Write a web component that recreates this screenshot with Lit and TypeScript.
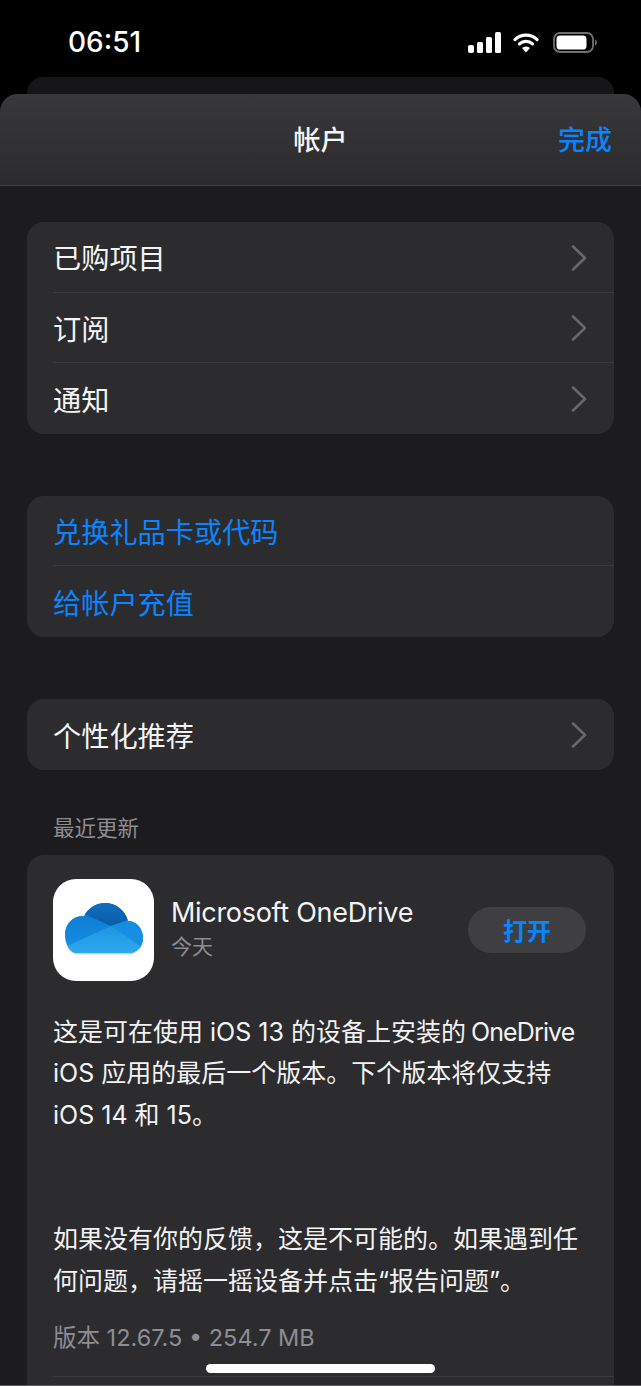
import { LitElement, html, css, svg } from "lit";
import { customElement } from "lit/decorators.js";

const chevron = html`<svg class="chev" width="16" height="26" viewBox="0 0 16 26"><path d="M2 1.5 L14 13 L2 24.5" fill="none" stroke="#68686c" stroke-width="2.6" stroke-linecap="round" stroke-linejoin="round"/></svg>`;

const silhouette = "M19 13 C24 4 32 0 40 0 C51 0 60 7 63 18 C72 18 78 26 78 35 C78 43 72 50 64 50 L12 50 C5 50 0 41 0 31 C0 20 9 12 19 13 Z";

@customElement("app-root")
export class AppRoot extends LitElement {
  static styles = css`
    :host { display: block; width: 641px; height: 1386px; overflow: hidden; background: #000; position: relative;
      font-family: Inter, "Noto Sans CJK SC", sans-serif; color: #f4f4f5; }
    .status { height: 77px; display: flex; justify-content: space-between; align-items: flex-start; padding: 27px 44px 0 68px; box-sizing: border-box; }
    .time { font-size: 28px; line-height: 30px; font-weight: 500; color: #fff; }
    .icons { display: flex; align-items: center; padding-top: 5px; }
    .wifi { margin: 0 14px 0 12px; }
    .behind { height: 17px; margin: 0 27px; background: #161618; border-radius: 16px 16px 0 0; }
    .sheet { height: 1292px; background: #1c1c1e; border-radius: 18px 18px 0 0; overflow: hidden; display: flex; flex-direction: column; }
    .head { height: 92px; flex: none; box-sizing: border-box; display: grid; grid-template-columns: 1fr auto 1fr; align-items: center; padding: 0 29px 2px;
      background: linear-gradient(180deg, #38383a 0%, #2b2b2d 100%); border-bottom: 1px solid #3e3e40; }
    .title { grid-column: 2; font-size: 27px; font-weight: 500; color: #f5f5f5; }
    .done { grid-column: 3; justify-self: end; font-size: 27px; font-weight: 500; color: #0a84ff; }
    .body { padding: 36px 27px 0; display: flex; flex-direction: column; }
    .group { background: #2c2c2e; border-radius: 17px; margin-bottom: 62px; }
    .row { height: 70.6px; box-sizing: border-box; display: flex; align-items: center; justify-content: space-between; margin-left: 26px; padding-right: 27px; font-size: 28.2px; border-bottom: 1px solid #3b3b3d; }
    .row:last-child { border-bottom: 0; }
    .chev { margin-top: 2px; }
    .blue { color: #0a84ff; }
    .label { font-size: 21.5px; line-height: 26px; color: #8d8d93; margin: -17px 0 14px 26px; }
    .card { background: #2c2c2e; border-radius: 17px 17px 0 0; padding: 24px 0 0 26px; height: 560px; box-sizing: border-box; }
    .app { display: flex; align-items: center; padding-right: 28px; }
    .logo { width: 101px; height: 102px; flex: none; background: #fff; border-radius: 23px; display: flex; align-items: center; justify-content: center; }
    .meta { flex: 1; margin-left: 17px; display: flex; flex-direction: column; margin-top: 1px; }
    .name { font-size: 27px; line-height: 34px; color: #f2f2f3; letter-spacing: -0.3px; }
    .today { font-size: 21px; line-height: 34px; color: #8d8d93; }
    .open { width: 118px; height: 46px; border-radius: 23px; background: #3f3f42; color: #0a84ff; font-size: 24px; font-weight: 600; display: flex; align-items: center; justify-content: center; }
    .text { margin-top: 31px; padding-right: 26px; font-size: 25px; line-height: 41.6px; color: #f2f2f3; }
    .tight { letter-spacing: -0.035em; margin-left: -2px; }
    .gap { height: 83px; }
    .ver { margin-top: 16px; font-size: 23.5px; line-height: 38px; color: #8d8d93; }
    .rule { margin-top: 19px; height: 1px; background: #3b3b3d; }
    .home { position: absolute; left: 206px; top: 1364px; width: 229px; height: 9px; border-radius: 5px; background: #fff; }
    .edge { position: absolute; left: 0; right: 0; bottom: 0; height: 1px; background: #5f5f61; }
  `;

  render() {
    return html`
      <div class="status">
        <div class="time">06:51</div>
        <div class="icons">
          <svg width="33" height="21" viewBox="0 0 33 21" fill="#fff">
            <rect x="0" y="13" width="6" height="8" rx="2"/><rect x="9" y="10" width="6" height="11" rx="1.5"/>
            <rect x="18" y="5" width="6" height="16" rx="1.5"/><rect x="27" y="0" width="6" height="21" rx="1.5"/>
          </svg>
          <svg class="wifi" width="26" height="21" viewBox="0 0 27 21">
            <path d="M2 7.5 A16.5 16.5 0 0 1 25 7.5" fill="none" stroke="#fff" stroke-width="3.2" stroke-linecap="round"/>
            <path d="M6.7 12 A10 10 0 0 1 20.3 12" fill="none" stroke="#fff" stroke-width="3.2" stroke-linecap="round"/>
            <path d="M13.5 21 L9.3 16.3 A6.2 6.2 0 0 1 17.7 16.3 Z" fill="#fff"/>
          </svg>
          <svg width="44" height="21" viewBox="0 0 44 21">
            <rect x="1" y="1" width="39" height="19" rx="6" fill="none" stroke="#6f6f6f" stroke-width="1.8"/>
            <rect x="3.5" y="3.5" width="30" height="14" rx="3.6" fill="#fff"/>
            <path d="M42 7.5 C43.3 8 43.9 9.2 43.9 10.5 C43.9 11.8 43.3 13 42 13.5 Z" fill="#6f6f6f"/>
          </svg>
        </div>
      </div>
      <div class="behind"></div>
      <div class="sheet">
        <div class="head"><div class="title">帐户</div><div class="done">完成</div></div>
        <div class="body">
          <div class="group">
            <div class="row">已购项目${chevron}</div>
            <div class="row">订阅${chevron}</div>
            <div class="row">通知${chevron}</div>
          </div>
          <div class="group">
            <div class="row blue">兑换礼品卡或代码</div>
            <div class="row blue">给帐户充值</div>
          </div>
          <div class="group">
            <div class="row">个性化推荐${chevron}</div>
          </div>
          <div class="label">最近更新</div>
          <div class="card">
            <div class="app">
              <div class="logo">
                <svg width="78" height="53" viewBox="0 0 78 53">
                  ${svg`
                  <defs>
                    <clipPath id="cloud"><path d="${silhouette}"/></clipPath>
                    <linearGradient id="top" x1="0" y1="0" x2="0" y2="1"><stop offset="0" stop-color="#0f6fc2"/><stop offset="1" stop-color="#0a5ca8"/></linearGradient>
                    <linearGradient id="left" x1="0" y1="0" x2="0" y2="1"><stop offset="0" stop-color="#0e78cf"/><stop offset="1" stop-color="#1490e4"/></linearGradient>
                    <linearGradient id="low" x1="0" y1="0" x2="0" y2="1"><stop offset="0" stop-color="#1e96e4"/><stop offset="1" stop-color="#2eaaee"/></linearGradient>
                  </defs>
                  <path d="${silhouette}" fill="#a8adb3" opacity=".55" transform="translate(0 1.6)"/>
                  <g clip-path="url(#cloud)">
                    <rect x="0" y="0" width="78" height="50" fill="url(#left)"/>
                    <path d="M17 10 L46 23 L66 16 L60 -2 L20 -2 Z" fill="url(#top)"/>
                    <path d="M46 23 L64 17 L80 24 L80 46 Z" fill="#188ee2"/>
                    <path d="M-2 45 L46 23 L80 46 L80 52 L-2 52 Z" fill="url(#low)"/>
                  </g>
                  `}
                </svg>
              </div>
              <div class="meta"><div class="name">Microsoft OneDrive</div><div class="today">今天</div></div>
              <div class="open">打开</div>
            </div>
            <div class="text">这是可在使用 iOS 13 的设备上安装的 <span class="tight">OneDrive</span> iOS 应用的最后一个版本。下个版本将仅支持 iOS 14 和 15。
              <div class="gap"></div>
              如果没有你的反馈，这是不可能的。如果遇到任何问题，请摇一摇设备并点击“报告问题”。
            </div>
            <div class="ver">版本 12.67.5 • 254.7 MB</div>
            <div class="rule"></div>
          </div>
        </div>
      </div>
      <div class="home"></div>
      <div class="edge"></div>
    `;
  }
}
